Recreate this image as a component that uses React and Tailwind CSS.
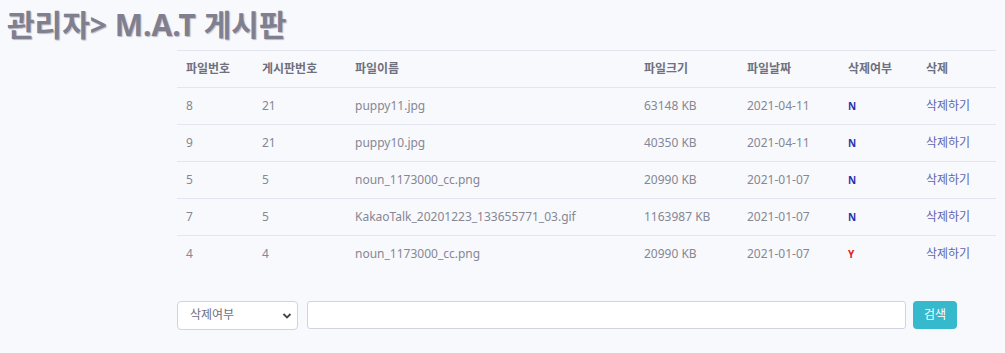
import React from "react";

const rows = [
  { id: 8, board: 21, name: "puppy11.jpg", size: "63148 KB", date: "2021-04-11", del: "N" },
  { id: 9, board: 21, name: "puppy10.jpg", size: "40350 KB", date: "2021-04-11", del: "N" },
  { id: 5, board: 5, name: "noun_1173000_cc.png", size: "20990 KB", date: "2021-01-07", del: "N" },
  { id: 7, board: 5, name: "KakaoTalk_20201223_133655771_03.gif", size: "1163987 KB", date: "2021-01-07", del: "N" },
  { id: 4, board: 4, name: "noun_1173000_cc.png", size: "20990 KB", date: "2021-01-07", del: "Y" },
];

const font = { fontFamily: '"Noto Sans", "Noto Sans CJK KR", sans-serif' };

export default function App() {
  return (
    <div className="w-[1005px] h-[353px] bg-[#f8f9fc] text-[#858796] overflow-hidden" style={font}>
      <h1 className="pl-[7px] pt-[4px] h-[50px] text-[30px] leading-[42px] font-bold text-[#7f7f8f] [text-shadow:1px_1px_1px_#b9b9c6]">
        관리자&gt; M.A.T 게시판
      </h1>
      <div className="ml-[177px] w-[819px]">
        <table className="w-full table-fixed border-collapse text-[12px]">
          <colgroup>
            <col className="w-[76px]" />
            <col className="w-[93px]" />
            <col className="w-[289px]" />
            <col className="w-[103px]" />
            <col className="w-[101px]" />
            <col className="w-[78px]" />
            <col />
          </colgroup>
          <thead>
            <tr className="h-[37px] border-t border-b border-[#e3e6f0] text-left">
              {["파일번호", "게시판번호", "파일이름", "파일크기", "파일날짜", "삭제여부", "삭제"].map((h) => (
                <th key={h} className="px-[9px] font-semibold text-[#6e707e]">{h}</th>
              ))}
            </tr>
          </thead>
          <tbody>
            {rows.map((r) => (
              <tr key={r.id} className="h-[37px] border-b border-[#e3e6f0] last:border-b-0">
                <td className="px-[9px]">{r.id}</td>
                <td className="px-[9px]">{r.board}</td>
                <td className="px-[9px] whitespace-nowrap">{r.name}</td>
                <td className="px-[9px] whitespace-nowrap">{r.size}</td>
                <td className="px-[9px]">{r.date}</td>
                <td className={`px-[9px] text-[10px] font-bold ${r.del === "Y" ? "text-[#e0201b]" : "text-[#2a30b0]"}`}>{r.del}</td>
                <td className="px-[9px] text-[#6165ad]">삭제하기</td>
              </tr>
            ))}
          </tbody>
        </table>
        <div className="mt-[28px] flex items-center">
          <div className="relative w-[121px] h-[29px] bg-white border border-[#d1d3e2] rounded-[4px] flex items-center pl-[12px] text-[12px] text-[#6e707e]">
            삭제여부
            <svg className="absolute right-[5px] top-[10px]" width="10" height="8" viewBox="0 0 10 8">
              <path d="M1.5 2 L5 5.5 L8.5 2" fill="none" stroke="#444" strokeWidth="1.8" />
            </svg>
          </div>
          <div className="ml-[9px] w-[599px] h-[28px] bg-white border border-[#d1d3e2] rounded-[3px]" />
          <button className="ml-[7px] w-[44px] h-[28px] bg-[#36b9cc] rounded-[4px] text-white text-[12px]">검색</button>
        </div>
      </div>
    </div>
  );
}
